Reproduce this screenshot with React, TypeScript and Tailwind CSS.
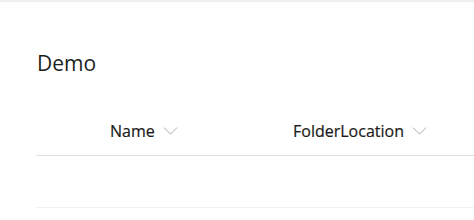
const COLUMNS = [
  { key: 'name', label: 'Name', width: 'w-[183px]' },
  { key: 'folder', label: 'FolderLocation', width: 'w-[200px]' },
];

function Chevron() {
  return (
    <svg viewBox="0 0 16 9" fill="none" className="h-[8px] w-[15px] text-[#a19f9d]">
      <path d="M1 1l7 7 7-7" stroke="currentColor" strokeWidth="1" strokeLinecap="round" strokeLinejoin="round" />
    </svg>
  );
}

export default function App() {
  return (
    <div
      className="h-[220px] w-[474px] overflow-hidden bg-white text-[#323130]"
      style={{ fontFamily: '"Open Sans", "Noto Sans", sans-serif' }}
    >
      <div className="h-[2px] bg-[#f0efee]" />

      <div className="pl-[37px] pt-[47px] text-[21px] leading-[28px] text-[#201f1e]">Demo</div>

      <div className="ml-[36px] mt-[29px]">
        <div className="flex h-[50px] items-center border-b border-[#e1dfdd] pl-[74px]">
          {COLUMNS.map((c) => (
            <div key={c.key} className={`flex shrink-0 items-center gap-[8px] ${c.width}`}>
              <span className="text-[16px] font-medium text-[#1b1a19] [-webkit-text-stroke:0.2px_#1b1a19]">
                {c.label}
              </span>
              <Chevron />
            </div>
          ))}
        </div>
        <div className="h-[52px] border-b border-[#f3f2f1]" />
      </div>
    </div>
  );
}
